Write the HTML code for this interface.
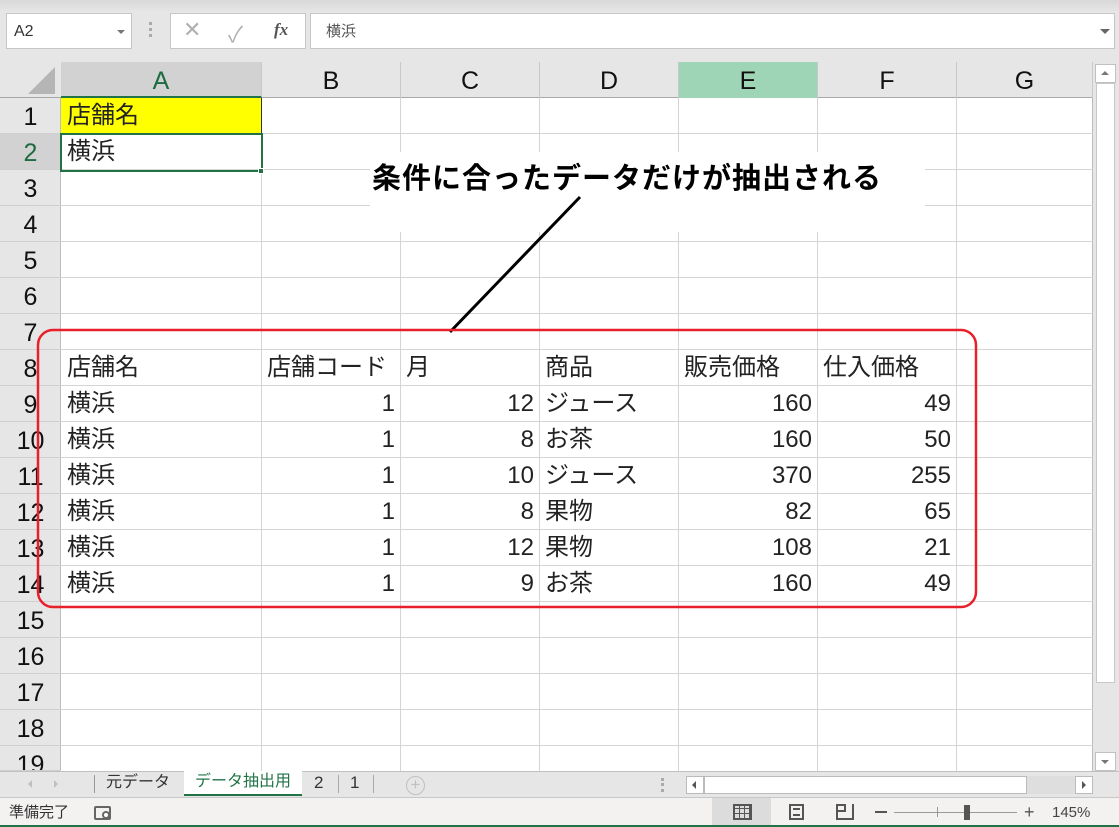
<!DOCTYPE html>
<html><head><meta charset="utf-8">
<style>
*{box-sizing:border-box;margin:0;padding:0}
body{width:1119px;height:827px;overflow:hidden;background:#e6e6e6;font-family:"Liberation Sans","Noto Sans CJK JP",sans-serif;position:relative}
.a{position:absolute}
.c{position:absolute;font-size:24px;line-height:36px;color:#222;white-space:nowrap;font-family:"Liberation Sans","Noto Sans CJK JP",sans-serif}
.r{text-align:right}
.vl{position:absolute;top:98px;height:673px;width:1px;background:#d4d4d4}
.hl{position:absolute;left:61px;width:1032px;height:1px;background:#d4d4d4}
.rh{position:absolute;left:0;width:61px;height:36px;text-align:center;font-size:25px;line-height:38px;color:#111;border-bottom:1px solid #cfcfcf}
.ch{position:absolute;top:62px;height:36px;text-align:center;font-size:25px;line-height:38px;color:#111;border-right:1px solid #c8c8c8}
</style></head><body>
<div class="a" style="left:0;top:0;width:1119px;height:12px;background:linear-gradient(#d8d8d8,#e6e6e6)"></div>
<!-- formula bar -->
<div class="a" style="left:6px;top:13px;width:126px;height:36px;background:#fff;border:1px solid #c6c6c6;font-size:16px;line-height:36px;padding-left:7px;color:#333">A2</div>
<div class="a" style="left:117px;top:30px;border-left:4px solid transparent;border-right:4px solid transparent;border-top:4px solid #777"></div>
<div class="a" style="left:149px;top:22px;width:3px;height:15px;border-left:3px dotted #aaa"></div>
<div class="a" style="left:170px;top:13px;width:136px;height:36px;background:#fff;border:1px solid #c6c6c6"></div>
<div class="a" style="left:183px;top:17px;font-size:22px;color:#b0b0b0">✕</div>
<div class="a" style="left:228px;top:17px;font-size:22px;color:#b0b0b0">✓</div>
<div class="a" style="left:274px;top:20px;font-size:17px;color:#555;font-style:italic;font-family:'Liberation Serif',serif;font-weight:bold">fx</div>
<div class="a" style="left:310px;top:13px;width:805px;height:36px;background:#fff;border:1px solid #c6c6c6;font-size:15px;line-height:36px;padding-left:15px;color:#555">横浜</div>
<div class="a" style="left:1100px;top:29px;border-left:5px solid transparent;border-right:5px solid transparent;border-top:5px solid #666"></div>
<!-- grid -->
<div class="a" style="left:61px;top:98px;width:1032px;height:673px;background:#fff"></div>
<div class="a" style="left:0;top:98px;width:61px;height:673px;background:#e6e6e6;border-right:1px solid #bdbdbd"></div>
<div class="a" style="left:0;top:62px;width:1093px;height:36px;background:#e6e6e6;border-bottom:1px solid #a8a8a8"></div>
<div class="a" style="left:28px;top:67px;width:0;height:0;border-left:27px solid transparent;border-bottom:27px solid #b5b5b5"></div>
<div class="ch" style="left:61px;width:201px;background:#d2d2d2;color:#1e6b41;border-bottom:2px solid #217346">A</div>
<div class="ch" style="left:262px;width:139px">B</div>
<div class="ch" style="left:401px;width:139px">C</div>
<div class="ch" style="left:540px;width:139px">D</div>
<div class="ch" style="left:679px;width:139px;background:#9fd5b7">E</div>
<div class="ch" style="left:818px;width:139px">F</div>
<div class="ch" style="left:957px;width:136px">G</div>
<div class="vl" style="left:261px"></div><div class="vl" style="left:400px"></div><div class="vl" style="left:539px"></div><div class="vl" style="left:678px"></div><div class="vl" style="left:817px"></div><div class="vl" style="left:956px"></div><div class="vl" style="left:1092px;background:#bbb"></div>
<div class="hl" style="top:133px"></div><div class="hl" style="top:169px"></div><div class="hl" style="top:205px"></div><div class="hl" style="top:241px"></div><div class="hl" style="top:277px"></div><div class="hl" style="top:313px"></div><div class="hl" style="top:349px"></div><div class="hl" style="top:385px"></div><div class="hl" style="top:421px"></div><div class="hl" style="top:457px"></div><div class="hl" style="top:493px"></div><div class="hl" style="top:529px"></div><div class="hl" style="top:565px"></div><div class="hl" style="top:601px"></div><div class="hl" style="top:637px"></div><div class="hl" style="top:673px"></div><div class="hl" style="top:709px"></div><div class="hl" style="top:745px"></div>
<div class="rh" style="top:98px">1</div>
<div class="rh" style="top:134px;background:#d2d2d2;color:#1e6b41">2</div>
<div class="rh" style="top:170px">3</div><div class="rh" style="top:206px">4</div><div class="rh" style="top:242px">5</div><div class="rh" style="top:278px">6</div><div class="rh" style="top:314px">7</div><div class="rh" style="top:350px">8</div><div class="rh" style="top:386px">9</div><div class="rh" style="top:422px">10</div><div class="rh" style="top:458px">11</div><div class="rh" style="top:494px">12</div><div class="rh" style="top:530px">13</div><div class="rh" style="top:566px">14</div><div class="rh" style="top:602px">15</div><div class="rh" style="top:638px">16</div><div class="rh" style="top:674px">17</div><div class="rh" style="top:710px">18</div><div class="rh" style="top:746px;height:25px;overflow:hidden">19</div>
<!-- A1/A2 -->
<div class="a" style="left:61px;top:98px;width:201px;height:36px;background:#ff0;border-right:1px solid #333"></div>
<div class="c" style="left:67px;top:98px">店舗名</div>
<div class="a" style="left:60px;top:133px;width:203px;height:39px;border:2px solid #217346"></div>
<div class="a" style="left:258px;top:168px;width:6px;height:6px;background:#217346;border:1px solid #fff"></div>
<div class="c" style="left:67px;top:134px">横浜</div>
<!-- callout -->
<div class="a" style="left:370px;top:152px;width:555px;height:80px;background:#fff"></div>
<div class="a" style="left:372px;top:159px;font-size:29px;font-weight:bold;color:#000;line-height:40px;font-family:'Liberation Sans','Noto Sans CJK JP',sans-serif;letter-spacing:1px;white-space:nowrap">条件に合ったデータだけが抽出される</div>
<svg class="a" style="left:0;top:0" width="1119" height="827"><line x1="580" y1="197" x2="450" y2="332" stroke="#000" stroke-width="3"/><rect x="38" y="330" width="938" height="277" rx="15" fill="none" stroke="#e8202a" stroke-width="2.5"/></svg>
<!-- table -->
<div class="c" style="left:67px;top:350px">店舗名</div><div class="c" style="left:267px;top:350px">店舗コード</div><div class="c" style="left:406px;top:350px">月</div><div class="c" style="left:545px;top:350px">商品</div><div class="c" style="left:684px;top:350px">販売価格</div><div class="c" style="left:823px;top:350px">仕入価格</div>
<div class="c" style="left:67px;top:386px">横浜</div><div class="c r" style="left:262px;width:133px;top:386px">1</div><div class="c r" style="left:401px;width:133px;top:386px">12</div><div class="c" style="left:545px;top:386px">ジュース</div><div class="c r" style="left:679px;width:133px;top:386px">160</div><div class="c r" style="left:818px;width:133px;top:386px">49</div>
<div class="c" style="left:67px;top:422px">横浜</div><div class="c r" style="left:262px;width:133px;top:422px">1</div><div class="c r" style="left:401px;width:133px;top:422px">8</div><div class="c" style="left:545px;top:422px">お茶</div><div class="c r" style="left:679px;width:133px;top:422px">160</div><div class="c r" style="left:818px;width:133px;top:422px">50</div>
<div class="c" style="left:67px;top:458px">横浜</div><div class="c r" style="left:262px;width:133px;top:458px">1</div><div class="c r" style="left:401px;width:133px;top:458px">10</div><div class="c" style="left:545px;top:458px">ジュース</div><div class="c r" style="left:679px;width:133px;top:458px">370</div><div class="c r" style="left:818px;width:133px;top:458px">255</div>
<div class="c" style="left:67px;top:494px">横浜</div><div class="c r" style="left:262px;width:133px;top:494px">1</div><div class="c r" style="left:401px;width:133px;top:494px">8</div><div class="c" style="left:545px;top:494px">果物</div><div class="c r" style="left:679px;width:133px;top:494px">82</div><div class="c r" style="left:818px;width:133px;top:494px">65</div>
<div class="c" style="left:67px;top:530px">横浜</div><div class="c r" style="left:262px;width:133px;top:530px">1</div><div class="c r" style="left:401px;width:133px;top:530px">12</div><div class="c" style="left:545px;top:530px">果物</div><div class="c r" style="left:679px;width:133px;top:530px">108</div><div class="c r" style="left:818px;width:133px;top:530px">21</div>
<div class="c" style="left:67px;top:566px">横浜</div><div class="c r" style="left:262px;width:133px;top:566px">1</div><div class="c r" style="left:401px;width:133px;top:566px">9</div><div class="c" style="left:545px;top:566px">お茶</div><div class="c r" style="left:679px;width:133px;top:566px">160</div><div class="c r" style="left:818px;width:133px;top:566px">49</div>
<!-- vertical scrollbar -->
<div class="a" style="left:1093px;top:62px;width:26px;height:709px;background:#e6e6e6"></div>
<div class="a" style="left:1095px;top:64px;width:21px;height:19px;background:#fff;border:1px solid #c0c0c0"></div>
<div class="a" style="left:1101px;top:71px;border-left:4px solid transparent;border-right:4px solid transparent;border-bottom:4px solid #777"></div>
<div class="a" style="left:1096px;top:83px;width:19px;height:600px;background:#fff;border:1px solid #c8c8c8"></div>
<div class="a" style="left:1095px;top:752px;width:21px;height:19px;background:#fff;border:1px solid #c0c0c0"></div>
<div class="a" style="left:1101px;top:760px;border-left:4px solid transparent;border-right:4px solid transparent;border-top:4px solid #777"></div>
<!-- tab bar -->
<div class="a" style="left:0;top:771px;width:1119px;height:27px;background:#e6e6e6;border-top:1px solid #c0c0c0;border-bottom:1px solid #c8c8c8"></div>
<div class="a" style="left:28px;top:780px;border-top:4px solid transparent;border-bottom:4px solid transparent;border-right:4px solid #c0c0c0"></div>
<div class="a" style="left:54px;top:780px;border-top:4px solid transparent;border-bottom:4px solid transparent;border-left:4px solid #c0c0c0"></div>
<div class="a" style="left:94px;top:775px;width:1px;height:18px;background:#999"></div>
<div class="a" style="left:106px;top:772px;font-size:16px;line-height:22px;color:#333">元データ</div>
<div class="a" style="left:184px;top:771px;width:118px;height:25px;background:#fff;border-bottom:2px solid #217346;font-size:16px;line-height:22px;color:#217346;text-align:center">データ抽出用</div>
<div class="a" style="left:314px;top:772px;font-size:17px;line-height:22px;color:#333">2</div>
<div class="a" style="left:338px;top:775px;width:1px;height:18px;background:#aaa"></div>
<div class="a" style="left:350px;top:772px;font-size:17px;line-height:22px;color:#333">1</div>
<div class="a" style="left:373px;top:775px;width:1px;height:18px;background:#aaa"></div>
<div class="a" style="left:406px;top:776px;width:19px;height:19px;border:1px solid #c0c0c0;border-radius:50%;text-align:center;line-height:16px;color:#c0c0c0;font-size:17px">+</div>
<div class="a" style="left:661px;top:778px;width:3px;height:14px;border-left:3px dotted #aaa"></div>
<div class="a" style="left:686px;top:776px;width:18px;height:18px;background:#fff;border:1px solid #bbb"></div>
<div class="a" style="left:692px;top:781px;border-top:4px solid transparent;border-bottom:4px solid transparent;border-right:4px solid #555"></div>
<div class="a" style="left:704px;top:776px;width:323px;height:18px;background:#fff;border:1px solid #bbb"></div>
<div class="a" style="left:1027px;top:776px;width:48px;height:18px;background:#dedede"></div>
<div class="a" style="left:1075px;top:776px;width:18px;height:18px;background:#fff;border:1px solid #bbb"></div>
<div class="a" style="left:1082px;top:781px;border-top:4px solid transparent;border-bottom:4px solid transparent;border-left:4px solid #555"></div>
<!-- status bar -->
<div class="a" style="left:0;top:798px;width:1119px;height:29px;background:#f3f2f1;border-bottom:2px solid #217346"></div>
<div class="a" style="left:9px;top:802px;font-size:15px;line-height:22px;color:#333">準備完了</div>
<div class="a" style="left:94px;top:806px;width:17px;height:14px;border:2px solid #666;border-radius:2px"></div>
<div class="a" style="left:102px;top:811px;width:8px;height:8px;border:2px solid #666;border-radius:50%;background:#fff"></div>
<div class="a" style="left:712px;top:798px;width:59px;height:27px;background:#dcdcdc"></div>
<div class="a" style="left:733px;top:804px;width:19px;height:16px;border:2px solid #555;background:repeating-linear-gradient(90deg,transparent 0 4px,#555 4px 5px),repeating-linear-gradient(0deg,transparent 0 4px,#555 4px 5px)"></div>
<div class="a" style="left:789px;top:804px;width:15px;height:16px;border:2px solid #555"></div>
<div class="a" style="left:793px;top:808px;width:7px;height:8px;border-top:2px solid #555;border-bottom:2px solid #555"></div>
<div class="a" style="left:836px;top:804px;width:18px;height:16px;border:2px solid #555;border-top:none"></div>
<div class="a" style="left:836px;top:804px;width:10px;height:8px;border:2px solid #555"></div>
<div class="a" style="left:875px;top:811px;width:12px;height:2px;background:#555"></div>
<div class="a" style="left:894px;top:812px;width:123px;height:1px;background:#999"></div>
<div class="a" style="left:937px;top:807px;width:1px;height:10px;background:#999"></div>
<div class="a" style="left:964px;top:805px;width:6px;height:15px;background:#555"></div>
<div class="a" style="left:1024px;top:802px;font-size:18px;color:#555;line-height:20px">+</div>
<div class="a" style="left:1052px;top:803px;font-size:15px;color:#444;line-height:20px">145%</div>
</body></html>
